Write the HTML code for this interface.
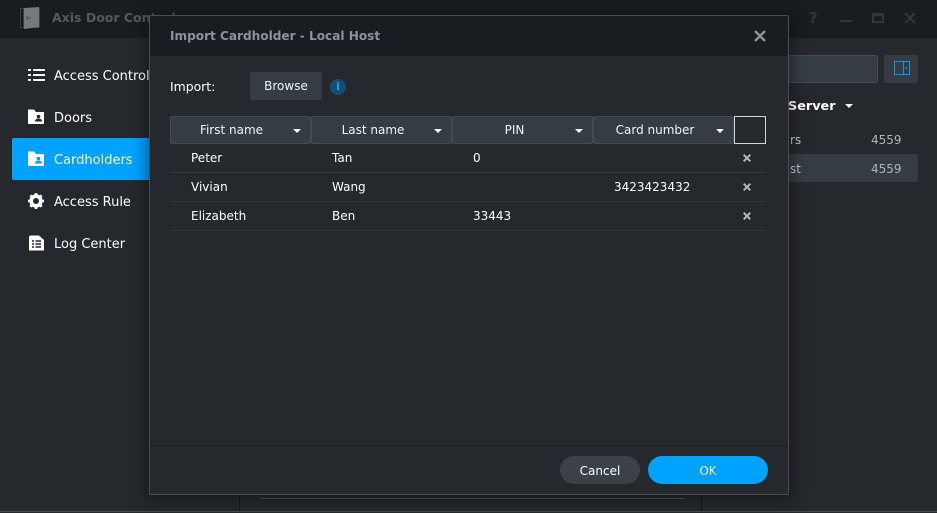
<!DOCTYPE html>
<html><head><meta charset="utf-8">
<style>
*{box-sizing:border-box}
html,body{margin:0;padding:0}
body{width:937px;height:513px;overflow:hidden;position:relative;background:#25282d;font-family:"DejaVu Sans","Liberation Sans",sans-serif;font-size:13px;color:#fff}
.a{position:absolute;white-space:nowrap}
.t{line-height:16px}
.r{font-size:12px}
.hd{top:116px;height:28px;background:#363c44;border:1px solid #444a52;border-radius:2px;text-align:center;line-height:27px;font-size:12px;color:#f2f4f6}
.car{position:absolute;width:0;height:0;border-left:4px solid transparent;border-right:4px solid transparent;border-top:4px solid #fff}
.ln{left:170px;width:596px;height:1px;background:#33373d}
</style></head><body>

<!-- background app -->
<div class="a" style="left:0;top:0;width:937px;height:38px;background:#191c21"></div>
<svg class="a" style="left:20px;top:7px" width="20" height="22" viewBox="0 0 20 22">
<rect x="0" y="1" width="20" height="20" fill="#3a3d42"/><rect x="1" y="2" width="2" height="18" fill="#15171a"/>
<path d="M4 1 L19 0 V20 L4 22Z" fill="#77797c"/><path d="M7 11h4M7 9v4" stroke="#5a5c60" stroke-width="1.5"/></svg>
<div class="a" style="left:52px;top:9px;font-size:12.500px;font-weight:bold;line-height:18px;color:#55585d">Axis Door Control</div>

<div class="a t" style="left:54px;top:69px">Access Control</div>
<div class="a t" style="left:54px;top:111px">Doors</div>
<div class="a" style="left:12px;top:138px;width:140px;height:42px;background:#00a2ff;border-radius:2px 0 0 2px"></div>
<div class="a t" style="left:54px;top:153px">Cardholders</div>
<div class="a t" style="left:54px;top:195px">Access Rule</div>
<div class="a t" style="left:54px;top:237px">Log Center</div>

<svg class="a" style="left:28px;top:67px" width="17" height="16" viewBox="0 0 17 16" fill="#fff">
<rect x="0" y="2" width="3" height="2"/><rect x="5" y="2" width="12" height="2"/><rect x="0" y="7" width="3" height="2"/><rect x="5" y="7" width="12" height="2"/><rect x="0" y="12" width="3" height="2"/><rect x="5" y="12" width="12" height="2"/></svg>
<svg class="a" style="left:28px;top:109px" width="16" height="16" viewBox="0 0 16 16">
<path d="M0 0.500H6L8 3H16V15H0Z" fill="#fff"/><circle cx="10.500" cy="7.500" r="1.800" fill="#25282d"/><path d="M7 12.500c0-4 7-4 7 0Z" fill="#25282d"/></svg>
<svg class="a" style="left:28px;top:151px" width="16" height="16" viewBox="0 0 16 16">
<path d="M0 0.500H6L8 3H16V15H0Z" fill="#fff"/><circle cx="10.500" cy="7.500" r="1.800" fill="#00a2ff"/><path d="M7 12.500c0-4 7-4 7 0Z" fill="#00a2ff"/></svg>
<svg class="a" style="left:28px;top:193px" width="16" height="16" viewBox="0 0 16 16">
<circle cx="8" cy="8" r="5.200" fill="none" stroke="#fff" stroke-width="3"/><path d="M8 0v16M0 8h16M2.300 2.300l11.400 11.400M13.700 2.300L2.300 13.700" stroke="#fff" stroke-width="2.600"/><circle cx="8" cy="8" r="3" fill="#25282d"/></svg>
<svg class="a" style="left:29px;top:235px" width="15" height="16" viewBox="0 0 15 16">
<path d="M1 0.500H10L15 5V15.500H0V1.500Z" fill="#fff"/><path d="M3 6h2M6.500 6H12M3 9h2M6.500 9H12M3 12h2M6.500 12H12" stroke="#25282d" stroke-width="1.400"/></svg>

<!-- right side -->
<div class="a" style="left:780px;top:55px;width:98px;height:28px;background:#363c44;border:1px solid #444a52;border-radius:2px"></div>
<div class="a" style="left:884px;top:55px;width:34px;height:28px;background:#363c44;border-radius:2px"></div>
<svg class="a" style="left:894px;top:61px" width="16" height="14" viewBox="0 0 16 14"><rect x="0.500" y="0.500" width="15" height="13" fill="none" stroke="#0d95e8"/><path d="M9.500 0v14" stroke="#0d95e8"/><path d="M11.500 5.500L13.500 7L11.500 8.500Z" fill="#0d95e8"/></svg>
<div class="a t" style="left:788px;top:99px;font-weight:bold;font-size:12.800px">Server</div>
<div class="car" style="left:845px;top:104px"></div>
<div class="a" style="left:700px;top:154px;width:218px;height:28px;background:#363c44;border-radius:2px"></div>
<div class="a t r" style="left:790px;top:132px;color:#c4c7ca">rs</div>
<div class="a t r" style="left:790px;top:161px;color:#c4c7ca">st</div>
<div class="a t r" style="left:871px;top:132px;color:#b0b3b7">4559</div>
<div class="a t r" style="left:871px;top:161px;color:#b0b3b7">4559</div>
<div class="a t" style="left:809px;top:10px;color:#33363a;font-size:15px;font-weight:bold">?</div>
<div class="a" style="left:840px;top:20px;width:12px;height:2px;background:#33363a"></div>
<div class="a" style="left:872px;top:13px;width:12px;height:10px;border:2px solid #33363a;border-top-width:3px"></div>
<svg class="a" style="left:904px;top:12px" width="12" height="12" viewBox="0 0 12 12"><path d="M1 1L11 11M11 1L1 11" stroke="#33363a" stroke-width="2.200"/></svg>
<div class="a" style="left:0;top:511px;width:937px;height:1px;background:#44474c"></div>
<div class="a" style="left:239px;top:495px;width:1px;height:16px;background:#16181b"></div>
<div class="a" style="left:701px;top:495px;width:1px;height:16px;background:#16181b"></div>
<div class="a" style="left:260px;top:498px;width:425px;height:1px;background:#4a4d51"></div>

<!-- dialog -->
<div class="a" style="left:149px;top:15px;width:640px;height:480px;background:#25282d;border:1px solid #4c4e52;border-radius:2px;box-shadow:0 2px 14px 4px rgba(0,0,0,.35)"></div>
<div class="a" style="left:150px;top:16px;width:638px;height:40px;background:#191c21"></div>
<div class="a" style="left:170px;top:27px;font-weight:bold;font-size:12.100px;line-height:18px;color:#8d9399">Import Cardholder - Local Host</div>
<svg class="a" style="left:754px;top:30px" width="12" height="12" viewBox="0 0 12 12"><path d="M1 1L11 11M11 1L1 11" stroke="#909396" stroke-width="2.400"/></svg>

<div class="a t" style="left:170px;top:79px;font-size:12.400px">Import:</div>
<div class="a r" style="left:250px;top:72px;width:72px;height:28px;background:#363c44;border-radius:2px;text-align:center;line-height:29px;color:#f2f4f6">Browse</div>
<div class="a" style="left:330px;top:79px;width:16px;height:16px;border-radius:50%;background:#134f75;color:#0ea5f5;text-align:center;font-size:11px;font-weight:bold;line-height:16px">i</div>

<div class="a hd" style="left:170px;width:141px;padding-right:18px">First name</div><div class="car" style="left:293px;top:129px"></div>
<div class="a hd" style="left:311px;width:141px;padding-right:17px">Last name</div><div class="car" style="left:434px;top:129px"></div>
<div class="a hd" style="left:452px;width:141px;padding-right:16px">PIN</div><div class="car" style="left:575px;top:129px"></div>
<div class="a hd" style="left:593px;width:141px;padding-right:17px">Card number</div><div class="car" style="left:716px;top:129px"></div>
<div class="a" style="left:734px;top:116px;width:32px;height:28px;border:1px solid #d4d5d6"></div>

<div class="a t r" style="left:191px;top:150px">Peter</div>
<div class="a t r" style="left:332px;top:150px">Tan</div>
<div class="a t r" style="left:473px;top:150px">0</div>
<div class="a t r" style="left:191px;top:179px">Vivian</div>
<div class="a t r" style="left:332px;top:179px">Wang</div>
<div class="a t r" style="left:614px;top:179px">3423423432</div>
<div class="a t r" style="left:191px;top:208px">Elizabeth</div>
<div class="a t r" style="left:332px;top:208px">Ben</div>
<div class="a t r" style="left:473px;top:208px">33443</div>
<div class="a ln" style="top:172px"></div>
<div class="a ln" style="top:201px"></div>
<div class="a ln" style="top:230px"></div>
<svg class="a" style="left:743px;top:154px" width="8" height="8" viewBox="0 0 8 8"><path d="M.7 .7L7.300 7.300M7.300 .7L.7 7.300" stroke="#b5b7b9" stroke-width="2"/></svg>
<svg class="a" style="left:743px;top:183px" width="8" height="8" viewBox="0 0 8 8"><path d="M.7 .7L7.300 7.300M7.300 .7L.7 7.300" stroke="#b5b7b9" stroke-width="2"/></svg>
<svg class="a" style="left:743px;top:212px" width="8" height="8" viewBox="0 0 8 8"><path d="M.7 .7L7.300 7.300M7.300 .7L.7 7.300" stroke="#b5b7b9" stroke-width="2"/></svg>

<div class="a" style="left:150px;top:445px;width:638px;height:1px;background:#191c21"></div>
<div class="a r" style="left:560px;top:456px;width:80px;height:28px;border-radius:14px;background:#3b4148;text-align:center;line-height:30px">Cancel</div>
<div class="a r" style="left:648px;top:456px;width:120px;height:28px;border-radius:14px;background:#00a2ff;text-align:center;line-height:30px">OK</div>
</body></html>
